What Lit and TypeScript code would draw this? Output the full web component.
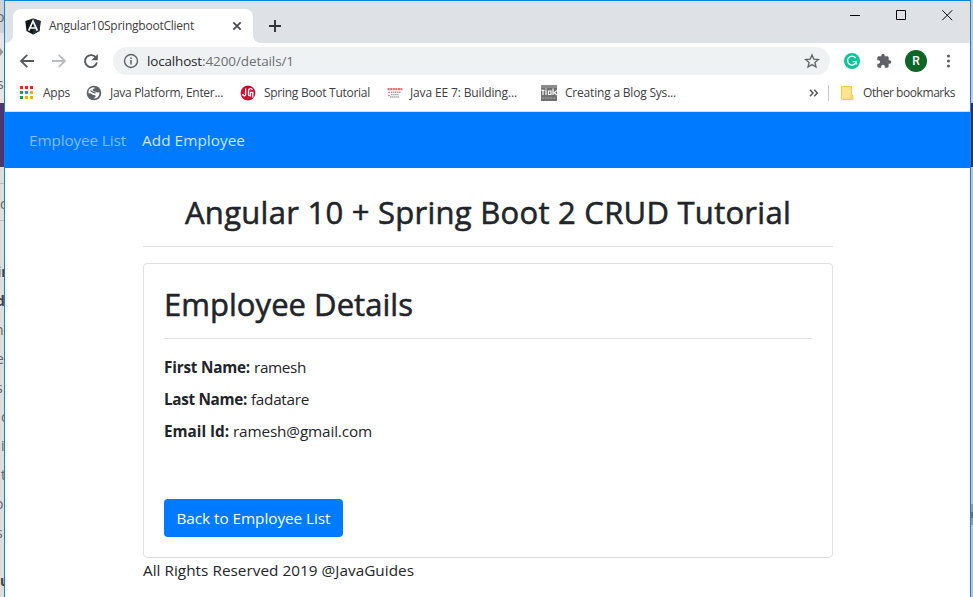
import { LitElement, html, css, svg } from "lit";
import { customElement, property } from "lit/decorators.js";

/** A single line of text, tracked so that it fills a given advance width. */
@customElement("fit-text")
class FitText extends LitElement {
  @property({ type: Number }) width = 0;
  @property() text = "";
  static styles = css`
    :host { display: inline-block; white-space: pre; flex: none; }
    span { display: inline-block; }
  `;
  render() {
    return html`<span>${this.text}</span>`;
  }
  updated() {
    const span = this.renderRoot.querySelector("span") as HTMLElement;
    span.style.letterSpacing = "0px";
    const natural = span.getBoundingClientRect().width;
    span.style.letterSpacing = `${(this.width - natural) / this.text.length}px`;
    this.style.width = `${this.width}px`;
  }
}

const t = (text: string, width: number) => html`<fit-text .text=${text} .width=${width}></fit-text>`;

const globe = html`<svg class="i16" viewBox="0 0 16 16"><circle cx="8" cy="8" r="7.300" fill="#5f6368"/><path d="M3 4.600C4.500 2.700 7 2.200 9 2.700c-.6 1.100-2.300 1-2.500 2.200-.1 1.300 1.900 1 3 1.900.9.800 1.800.900 3.900.5.300 2-.500 3.900-2 5.100-1 .700-2.300 1.100-3.600 1.100-.2-1 1.700-1.200 1.900-2.300.1-1-1.200-1.200-2.300-1.300-1.200-.1-1.500-1.300-2.700-1.500-.9-.1-1.600.1-2.200.1-.1-1.300 0-2.700.5-3.900z" fill="#fff"/><path d="M4.500 5.500c1 1.700 3.500 1.300 5 2.700" stroke="#5f6368" stroke-width="1.400" fill="none"/></svg>`;
const jg = html`<svg class="i16" viewBox="0 0 16 16"><circle cx="8" cy="8" r="7.400" fill="#c8102e"/><path d="M3 9v1.300q1.800 1.500 2.600-.5V3.500M12.500 5q-1-2-3-1.200-1 .6-1 2.600v3q0 1.500 2 1.400V7.300h2.300v5.500" fill="none" stroke="#fff" stroke-width="1.300"/></svg>`;
const oracle = html`<svg class="i16" viewBox="0 0 16 16"><path d="M.5 4.200h15" stroke="#f0737b" stroke-width="2.200" stroke-dasharray="2.200 .4"/><path d="M1 7.500h2M1 10.500h2" stroke="#f08c90" stroke-width="1.400"/><path d="M4 7.200h10M4 9.600h8M3 12h9" stroke="#aaa" stroke-width="1.400" stroke-dasharray="1.600 .4"/></svg>`;
const blog = html`<svg class="i16" viewBox="0 0 16 16"><path d="M0 0h16v16H0z" fill="#707070"/><path d="M0 0h16v3H0z" fill="#8c8c8c"/><path d="M.5 5.300h3M2 5v5M5 5v5M4.500 3.800h1M10 10V6H7.500v3.500H10M12 3.500V10M16 5.500l-2.800 2.300L16 10" fill="none" stroke="#fff" stroke-width="1.200"/><path d="M1 13h14" stroke="#aaa" stroke-dasharray="2 .7"/></svg>`;

const bookmarks = [
  { cls: "b1", icon: globe, text: "Java Platform, Enter...", w: 113 },
  { cls: "b2", icon: jg, text: "Spring Boot Tutorial", w: 106 },
  { cls: "b3", icon: oracle, text: "Java EE 7: Building...", w: 107 },
  { cls: "b4", icon: blog, text: "Creating a Blog Sys...", w: 111 },
];

const appColors = ["red", "red", "red", "green", "blue", "amber", "green", "amber", "amber"];

@customElement("browser-chrome")
class BrowserChrome extends LitElement {
  static styles = css`
    :host { display: block; font-family: "Open Sans", "Noto Sans", sans-serif; color: #3c4043; }
    svg { display: block; flex: none; }
    .strip { height: 42px; background: #dee1e6; display: flex; align-items: flex-start; justify-content: space-between; }
    .left { display: flex; height: 42px; align-items: flex-end; }
    .foot { width: 8px; height: 8px; background: #fff; }
    .foot i { display: block; width: 8px; height: 8px; background: #dee1e6; }
    .foot.l i { border-bottom-right-radius: 8px; }
    .foot.r i { border-bottom-left-radius: 8px; }
    .tab { box-sizing: border-box; width: 240px; height: 34px; background: #fff; border-radius: 8px 8px 0 0; display: flex; align-items: center; padding: 0 11px 0 12px; font-size: 12px; }
    .tab .title { margin-left: 8px; flex: 1; display: flex; margin-top: -1px; }
    .plus { margin: 0 0 10px 7px; }
    .wins { display: flex; height: 29px; }
    .bar { height: 36px; display: flex; align-items: center; background: #fff; padding-left: 14px; }
    .nav { margin-right: 16px; }
    .omni { box-sizing: border-box; width: 717px; height: 28px; border-radius: 14px; background: #eff2f3; display: flex; align-items: center; padding: 0 10px; margin-left: -2px; font-size: 13.500px; }
    .host { margin-left: 8px; color: #27292c; }
    .path { color: #6c7075; flex: 1; }
    .g { margin-left: 14px; }
    .ext { margin-left: 16px; }
    .av { width: 22px; height: 22px; border-radius: 50%; background: #0d6625; color: #fff; font: 500 12px Roboto, sans-serif; display: flex; align-items: center; justify-content: center; margin-left: 13px; }
    .dots { margin-left: 13px; }
    .marks { height: 33px; display: flex; align-items: center; background: #fff; padding: 0 15px 5px 15px; box-sizing: border-box; border-bottom: 1px solid #dadce0; font-size: 12px; }
    .apps { display: grid; grid-template-columns: repeat(3, 3px); gap: 2px; margin-right: 10px; }
    .apps i { width: 3px; height: 3px; }
    .red { background: #f02416; } .green { background: #0f9d58; } .blue { background: #2196f3; } .amber { background: #fbac00; }
    .b { display: flex; align-items: center; gap: 8px; }
    .i16 { width: 16px; height: 16px; }
    .b1 { margin-left: 16px; } .b2 { margin-left: 17px; } .b3 { margin-left: 17px; gap: 7px; } .b4 { margin-left: 24px; }
    .sp { flex: 1; }
    .sep { width: 1px; height: 16px; background: #c8cacd; margin: 0 12px 0 9px; }
    .folder { margin-right: 9px; }
  `;
  render() {
    return html`
      <div class="strip">
        <div class="left">
          <div class="foot l"><i></i></div>
          <div class="tab">
            <svg width="16" height="17" viewBox="0 0 16 17"><path d="M8 .4 15.700 3.100 14.500 13 8 16.600 1.500 13 .3 3.100z" fill="#10151c"/><path d="M8 .4 15.700 3.100 14.500 13 8 16.600z" fill="#26303c"/><path d="M3.700 12.600 8 3l4.300 9.600M5.600 10h4.800" fill="none" stroke="#fff" stroke-width="1.700"/></svg>
            <div class="title">${t("Angular10SpringbootClient", 145)}</div>
            <svg width="10" height="10" viewBox="0 0 10 10"><path d="M1.300 1.300l7.400 7.400M8.700 1.300 1.300 8.700" stroke="#44474a" stroke-width="1.700"/></svg>
          </div>
          <div class="foot r"><i></i></div>
          <svg class="plus" width="14" height="14" viewBox="0 0 14 14"><path d="M7 1v12M1 7h12" stroke="#303236" stroke-width="1.900"/></svg>
        </div>
        <svg class="wins" width="125" height="29" viewBox="0 0 125 29"><path d="M5 14.500h10M51.500 9.500h9v9h-9zM97.300 9.300l9.900 9.900M107.200 9.300l-9.900 9.900" fill="none" stroke="#000"/></svg>
      </div>
      <div class="bar">
        <svg class="nav" width="16" height="16" viewBox="0 0 16 16"><path d="M15 8H2.500M8.300 1.800 2 8l6.300 6.200" fill="none" stroke="#55595e" stroke-width="1.800"/></svg>
        <svg class="nav" width="16" height="16" viewBox="0 0 16 16"><path d="M1 8h12.500M7.700 1.800 14 8l-6.300 6.200" fill="none" stroke="#babcbe" stroke-width="1.800"/></svg>
        <svg class="nav" width="16" height="16" viewBox="0 0 16 16"><path d="M13.200 5A6 6 0 1 0 13.900 9.500" fill="none" stroke="#55595e" stroke-width="1.900"/><path d="M14.800 1v6.300H8.500z" fill="#55595e"/></svg>
        <div class="omni">
          <svg width="16" height="16" viewBox="0 0 16 16"><circle cx="8" cy="8" r="6.500" fill="none" stroke="#5f6368" stroke-width="1.400"/><path d="M8 7v4.500M8 4.400V6" stroke="#5f6368" stroke-width="1.500"/></svg>
          <span class="host">${t("localhost", 55)}</span><span class="path">${t(":4200/details/1", 92)}</span>
          <svg width="16" height="16" viewBox="0 0 16 16"><path d="M8 1.900l1.800 4.200 4.600.4-3.500 3 1.100 4.500L8 11.600 4 14l1.100-4.500-3.500-3 4.600-.4z" fill="none" stroke="#5f6368" stroke-width="1.300"/></svg>
        </div>
        <svg class="g" width="16" height="16" viewBox="0 0 16 16"><circle cx="8" cy="8" r="8" fill="#0fc39a"/><path d="M11.700 5.200A4.400 4.400 0 1 0 12.300 8.600H8.800M12.400 8.200v3.400" fill="none" stroke="#fff" stroke-width="1.300"/></svg>
        <svg class="ext" width="16" height="16" viewBox="0 0 24 24"><path d="M20.500 11H19V7c0-1.100-.9-2-2-2h-4V3.500a2.500 2.500 0 0 0-5 0V5H4c-1.100 0-2 .9-2 2v3.800h1.500a2.700 2.700 0 0 1 0 5.400H2V20c0 1.100.9 2 2 2h3.800v-1.500a2.700 2.700 0 0 1 5.400 0V22H17c1.100 0 2-.9 2-2v-4h1.500a2.500 2.500 0 0 0 0-5z" fill="#5f6368"/></svg>
        <div class="av">R</div>
        <svg class="dots" width="16" height="16" viewBox="0 0 16 16" fill="#5f6368"><circle cx="8.500" cy="3" r="1.600"/><circle cx="8.500" cy="8" r="1.600"/><circle cx="8.500" cy="13" r="1.600"/></svg>
      </div>
      <div class="marks">
        <div class="apps">${appColors.map((c) => html`<i class=${c}></i>`)}</div>
        ${t("Apps", 27)}
        ${bookmarks.map((b) => html`<div class="b ${b.cls}">${b.icon}${t(b.text, b.w)}</div>`)}
        <div class="sp"></div>
        <svg width="10" height="8" viewBox="0 0 10 8"><path d="M1 .8 4 4 1 7.200M5.300.8l3 3.200-3 3.200" fill="none" stroke="#55585c" stroke-width="1.500"/></svg>
        <div class="sep"></div>
        <svg class="folder" width="13" height="14" viewBox="0 0 13 14"><path d="M.5.500h10v9h1.500v4H.5z" fill="#fee391" stroke="#f7c84b"/><path d="M10 13.500V10" stroke="#f7c84b"/></svg>
        ${t("Other bookmarks", 92)}
      </div>
    `;
  }
}

@customElement("employee-page")
class EmployeePage extends LitElement {
  static styles = css`
    :host { display: block; font-family: "Open Sans", "Noto Sans", sans-serif; font-size: 15.300px; line-height: 24px; color: #212529; }
    nav { height: 56px; background: #007bff; display: flex; align-items: center; gap: 16px; padding: 0 24px; }
    .dim { color: #80bdff; }
    .lite { color: #cce5ff; }
    main { margin: 0 137px 0 138px; padding-top: 25px; }
    h2 { margin: 0; font-size: 31px; line-height: 38px; font-weight: 500; -webkit-text-stroke: 0.550px #212529; }
    .top { text-align: center; }
    hr { border: 0; height: 1px; margin: 15px 0 16px; background: #e2e2e2; }
    .card { box-sizing: border-box; height: 295px; border: 1px solid #dfdfdf; border-radius: 4px; padding: 21px 20px 20px; }
    .row { display: flex; gap: 4px; height: 24px; margin-bottom: 8px; }
    .row b { font-weight: 700; }
    button { display: flex; align-items: center; justify-content: center; width: 179px; height: 38px; margin-top: 56px; padding: 0; border: 0; border-radius: 4px; background: #007bff; color: #fff; font: inherit; }
  `;
  render() {
    return html`
      <nav><span class="dim">${t("Employee List", 97)}</span><span class="lite">${t("Add Employee", 103)}</span></nav>
      <main>
        <h2 class="top">${t("Angular 10 + Spring Boot 2 CRUD Tutorial", 606)}</h2>
        <hr />
        <div class="card">
          <h2>${t("Employee Details", 249)}</h2>
          <hr />
          <div class="row"><b>${t("First Name:", 86)}</b>${t("ramesh", 52)}</div>
          <div class="row"><b>${t("Last Name:", 83)}</b>${t("fadatare", 58)}</div>
          <div class="row"><b>${t("Email Id:", 65)}</b>${t("ramesh@gmail.com", 139)}</div>
          <button>${t("Back to Employee List", 154)}</button>
        </div>
        <div>${t("All Rights Reserved 2019 @JavaGuides", 271)}</div>
      </main>
    `;
  }
}

const fragments = [
  { y: 22, c: "o", x: -4 }, { y: 89, c: "s", x: -3 }, { y: 209, c: "c", x: 0 },
  { y: 277, c: "in", x: -3, bold: true }, { y: 306, c: "d", x: -4, bold: true }, { y: 335, c: "n", x: -5 },
  { y: 364, c: "e", x: -4 }, { y: 393, c: "s", x: -4 }, { y: 422, c: "c", x: 1 }, { y: 451, c: "i", x: 1 },
  { y: 480, c: "t", x: 1 }, { y: 509, c: "o", x: -5 }, { y: 538, c: "s", x: -4 }, { y: 586, c: "u", x: 0, bold: true },
];

@customElement("app-root")
class AppRoot extends LitElement {
  static styles = css`
    :host { display: grid; grid-template-columns: 4px 967px 2px; width: 973px; height: 597px; overflow: hidden; }
    .edge { overflow: hidden; background: #d9d9d9; }
    .edge svg { display: block; }
    .window { box-sizing: border-box; height: 597px; border: 1px solid #0a84d8; border-bottom: 0; background: #fff; overflow: hidden; }
    .frag { font-family: "Open Sans", sans-serif; font-size: 14px; fill: #666; }
    .bold { font-weight: 700; fill: #444; }
  `;
  render() {
    return html`
      <div class="edge">
        <svg width="4" height="597" viewBox="0 0 4 597">
          <path d="M0 0h4v33H0z" fill="#cdd2d8"/><path d="M0 33h4v70H0z" fill="#e6e6e6"/><path d="M0 103h4v64H0z" fill="#50346c"/><path d="M0 167h4v430H0z" fill="#dedede"/>
          <path d="M0 183.500h4M0 220.500h4" stroke="#bbb"/><path d="M0 48l3.500 4L0 56z" fill="#999"/>
          ${fragments.map((f) => svg`<text class="frag ${f.bold ? "bold" : ""}" x=${f.x} y=${f.y}>${f.c}</text>`)}
        </svg>
      </div>
      <div class="window"><browser-chrome></browser-chrome><employee-page></employee-page></div>
      <div class="edge">
        <svg width="2" height="597" viewBox="0 0 2 597"><path d="M0 0h2v103H0z" fill="#c9cbce"/><path d="M0 103h2v64H0z" fill="#3d2a55"/><path d="M0 167h2v430H0z" fill="#c4c4c4"/><path d="M0 504h2v21H0z" fill="#999"/><path d="M1 512v6" stroke="#444"/></svg>
      </div>
    `;
  }
}
